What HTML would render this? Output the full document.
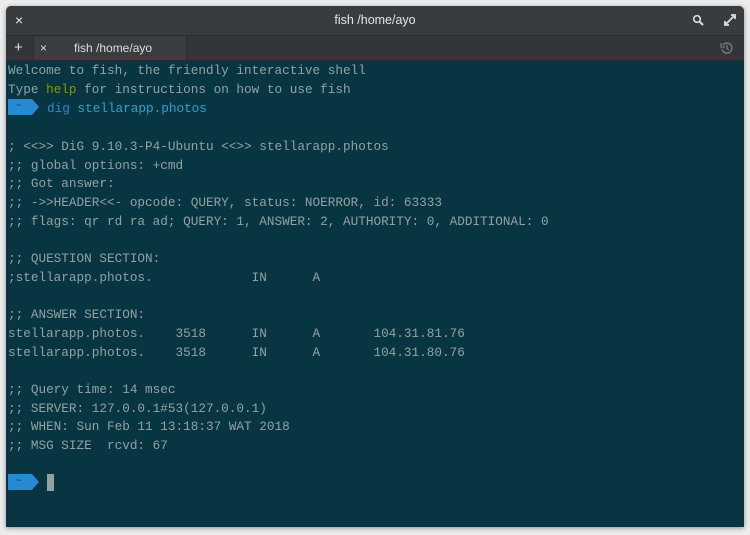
<html><head><style>
body{margin:0;width:750px;height:535px;background:#ececec;overflow:hidden;font-family:"Liberation Sans",sans-serif}
.win{position:absolute;left:6px;top:6px;width:738px;height:521px;border-radius:5px 5px 0 0;overflow:hidden;background:#073642;box-shadow:0 1px 5px rgba(0,0,0,.4)}
.title{height:29px;background:#393c3f;color:#e4e4e4;font-size:12.5px;text-align:center;line-height:29px;position:relative;border-bottom:1px solid #2a2c2e}
.tabs{height:24px;background:#333639;position:relative;border-bottom:1px solid #2a2c2e}
.tab{position:absolute;left:27px;top:0;width:152px;height:24px;background:#3a3d40;border-left:1px solid #2a2c2e;border-right:1px solid #2a2c2e;color:#ddd;font-size:12px;line-height:24px}
.term{position:absolute;top:56px;left:2px;right:0;font-family:"Liberation Mono",monospace;font-size:12.7px;line-height:18.7px;color:#93a1a1;white-space:pre}
.pr{display:inline-block;position:relative;width:24px;height:16px;background:#268bd2;vertical-align:-3px;margin-right:15px}
.pr:after{content:"";position:absolute;right:-7px;top:0;border-left:7px solid #268bd2;border-top:8px solid transparent;border-bottom:8px solid transparent}
.pr span{position:absolute;left:8px;top:-2px;font-size:9px;color:#073642}
</style></head><body>
<div class="win">
<div class="title"><span style="position:absolute;left:9px;font-size:14px">×</span>fish  /home/ayo
<svg style="position:absolute;left:686px;top:8px" width="12" height="12"><circle cx="5" cy="5" r="3.3" fill="none" stroke="#ddd" stroke-width="1.6"/><path d="M7.5 7.5L11 11" stroke="#ddd" stroke-width="2"/></svg>
<svg style="position:absolute;left:718px;top:8px" width="12" height="12"><path d="M1 11L11 1M7 1h4v4M1 7v4h4" fill="none" stroke="#ddd" stroke-width="1.8"/></svg></div>
<div class="tabs"><span style="position:absolute;left:8px;color:#ddd;font-size:15px;line-height:24px">+</span>
<div class="tab"><span style="position:absolute;left:6px">×</span><span style="position:absolute;left:40px">fish  /home/ayo</span></div>
<svg style="position:absolute;left:714px;top:5px" width="14" height="14"><path d="M3 4A5 5 0 1 1 2 8" fill="none" stroke="#777" stroke-width="1.5"/><path d="M1 2v4h4" fill="none" stroke="#777" stroke-width="1.3"/><path d="M7 4v3.5l2 1.5" fill="none" stroke="#777" stroke-width="1.3"/></svg></div>
<div class="term">Welcome to fish, the friendly interactive shell
Type <span style="color:#859900">help</span> for instructions on how to use fish
<span class="pr"><span>~</span></span><span style="color:#268bd2">dig</span> <span style="color:#2aa1d8">stellarapp.photos</span>

; &lt;&lt;&gt;&gt; DiG 9.10.3-P4-Ubuntu &lt;&lt;&gt;&gt; stellarapp.photos
;; global options: +cmd
;; Got answer:
;; -&gt;&gt;HEADER&lt;&lt;- opcode: QUERY, status: NOERROR, id: 63333
;; flags: qr rd ra ad; QUERY: 1, ANSWER: 2, AUTHORITY: 0, ADDITIONAL: 0

;; QUESTION SECTION:
;stellarapp.photos.             IN      A

;; ANSWER SECTION:
stellarapp.photos.    3518      IN      A       104.31.81.76
stellarapp.photos.    3518      IN      A       104.31.80.76

;; Query time: 14 msec
;; SERVER: 127.0.0.1#53(127.0.0.1)
;; WHEN: Sun Feb 11 13:18:37 WAT 2018
;; MSG SIZE  rcvd: 67

<span class="pr"><span>~</span></span><span style="display:inline-block;width:7px;height:17px;background:#93a1a1;vertical-align:-4px"></span></div>
</div>
</body></html>
